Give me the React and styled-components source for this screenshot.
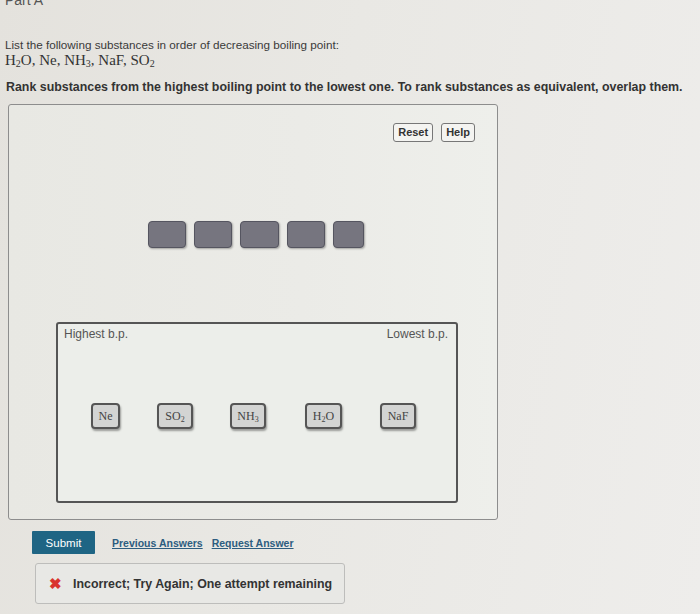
import React from "react";
import styled, { createGlobalStyle } from "styled-components";

const Global = createGlobalStyle`
  html, body { margin: 0; padding: 0; }
  body {
    width: 700px; height: 614px; overflow: hidden;
    background: linear-gradient(100deg, #e4e2dd 0%, #e9e8e4 45%, #eeedeb 100%);
    font-family: "Liberation Sans", Arial, sans-serif;
    color: #333;
  }
`;

const Page = styled.div`
  position: relative;
  padding: 0 0 0 5px;
  height: 614px;
  box-sizing: border-box;
`;

const PartTitle = styled.div`
  font-size: 14px;
  color: #555;
  margin-top: -8px;
  height: 14px;
`;

const Prompt = styled.div`
  margin-top: 32px;
  font-size: 11.7px;
  color: #3a3a3a;
  line-height: 14px;
`;

const Formula = styled.div`
  font-family: "Liberation Serif", "Times New Roman", serif;
  font-size: 15px;
  color: #333;
  line-height: 17px;
  sub { font-size: 10px; vertical-align: -2px; line-height: 0; }
`;

const Instruction = styled.div`
  margin-top: 11px;
  font-size: 12.4px;
  font-weight: bold;
  color: #333;
  padding-left: 1px;
`;

const Panel = styled.div`
  margin: 10px 0 0 3px;
  width: 490px;
  height: 416px;
  box-sizing: border-box;
  border: 1px solid #8d8d8d;
  border-radius: 3px;
  background: linear-gradient(90deg, #e8e8e3 0%, #ebebe7 60%, #eeefeb 100%);
  display: flex;
  flex-direction: column;
`;

const Toolbar = styled.div`
  display: flex;
  justify-content: flex-end;
  gap: 8px;
  padding: 18px 22px 0 0;
`;

const ToolButton = styled.button`
  font-family: "Liberation Sans", Arial, sans-serif;
  font-size: 11px;
  font-weight: bold;
  color: #333;
  background: #f4f4f1;
  border: 1px solid #777;
  border-radius: 3px;
  height: 19px;
  padding: 0 4px;
  line-height: 17px;
`;

const Slots = styled.div`
  display: flex;
  gap: 8px;
  padding: 79px 0 0 139px;
`;

const Slot = styled.div`
  width: ${(p) => p.w}px;
  height: 27px;
  box-sizing: border-box;
  border: 1px solid #555560;
  border-radius: 4px;
  background: #76757f;
  box-shadow: 1px 1px 2px rgba(0,0,0,0.3);
`;

const RankBox = styled.div`
  margin: 74px 0 0 47px;
  width: 402px;
  height: 181px;
  box-sizing: border-box;
  border: 2px solid #555;
  border-radius: 3px;
  background: #eceeea;
  display: flex;
  flex-direction: column;
`;

const Ends = styled.div`
  display: flex;
  justify-content: space-between;
  padding: 3px 8px 0 6px;
  font-size: 12px;
  color: #555;
`;

const Items = styled.div`
  display: flex;
  padding: 62px 0 0 33px;
`;

const Tile = styled.div`
  width: ${(p) => p.w}px;
  margin-left: ${(p) => p.gap}px;
  height: 26px;
  box-sizing: border-box;
  border: 2px solid #555;
  border-radius: 4px;
  background: #d3d4d3;
  box-shadow: 1px 2px 2px rgba(0,0,0,0.35);
  display: flex;
  align-items: center;
  justify-content: center;
  font-family: "Liberation Serif", "Times New Roman", serif;
  font-size: 12px;
  color: #444;
`;

const TileLabel = styled.span`
  line-height: 14px;
  sub { font-size: 8px; vertical-align: -2px; line-height: 0; }
`;

const Actions = styled.div`
  display: flex;
  align-items: center;
  margin: 11px 0 0 27px;
`;

const Submit = styled.button`
  font-family: "Liberation Sans", Arial, sans-serif;
  background: #1f6584;
  color: #fff;
  border: none;
  border-radius: 1px;
  width: 63px;
  height: 23px;
  font-size: 11.5px;
  margin-right: 17px;
`;

const LinkText = styled.a`
  font-size: 10.5px;
  font-weight: bold;
  color: #2d5d80;
  text-decoration: underline;
  margin-right: 9px;
`;

const Feedback = styled.div`
  margin: 9px 0 0 30px;
  width: 310px;
  height: 41px;
  box-sizing: border-box;
  border: 1px solid #bdbdbb;
  border-radius: 3px;
  background: #e8e8e5;
  display: flex;
  align-items: center;
  padding-left: 13px;
  font-size: 12.4px;
  font-weight: bold;
  color: #333;
`;

const Cross = styled.span`
  color: #d9342e;
  font-size: 15px;
  font-weight: bold;
  margin-right: 11px;
`;

export default function App() {
  const slots = [38, 38, 39, 38, 31];
  const tiles = [
    { w: 29, gap: 0, c: <>Ne</> },
    { w: 36, gap: 37, c: <>SO<sub>2</sub></> },
    { w: 36, gap: 37, c: <>NH<sub>3</sub></> },
    { w: 37, gap: 39, c: <>H<sub>2</sub>O</> },
    { w: 36, gap: 38, c: <>NaF</> },
  ];
  return (
    <>
      <Global />
      <Page>
        <PartTitle>Part A</PartTitle>
        <Prompt>List the following substances in order of decreasing boiling point:</Prompt>
        <Formula>
          H<sub>2</sub>O, Ne, NH<sub>3</sub>, NaF, SO<sub>2</sub>
        </Formula>
        <Instruction>
          Rank substances from the highest boiling point to the lowest one. To rank substances as equivalent, overlap them.
        </Instruction>
        <Panel>
          <Toolbar>
            <ToolButton>Reset</ToolButton>
            <ToolButton>Help</ToolButton>
          </Toolbar>
          <Slots>
            {slots.map((w, i) => (
              <Slot key={i} w={w} />
            ))}
          </Slots>
          <RankBox>
            <Ends>
              <span>Highest b.p.</span>
              <span>Lowest b.p.</span>
            </Ends>
            <Items>
              {tiles.map((t, i) => (
                <Tile key={i} w={t.w} gap={t.gap}>
                  <TileLabel>{t.c}</TileLabel>
                </Tile>
              ))}
            </Items>
          </RankBox>
        </Panel>
        <Actions>
          <Submit>Submit</Submit>
          <LinkText>Previous Answers</LinkText>
          <LinkText>Request Answer</LinkText>
        </Actions>
        <Feedback>
          <Cross>✖</Cross>
          Incorrect; Try Again; One attempt remaining
        </Feedback>
      </Page>
    </>
  );
}
